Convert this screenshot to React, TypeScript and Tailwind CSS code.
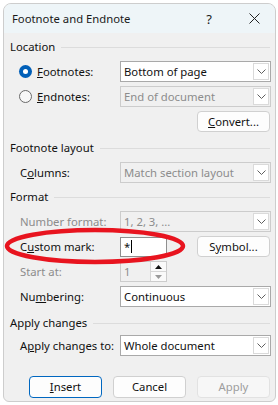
import React from "react";

const FONT = { fontFamily: '"Segoe UI", "Noto Sans", "Open Sans", sans-serif' };

function Chevron({ color = "#5f5f5f" }: { color?: string }) {
  return (
    <svg width="9" height="5" viewBox="0 0 9 5" fill="none" aria-hidden="true">
      <path d="M0.5 0.5 4.5 4.5 8.5 0.5" stroke={color} strokeWidth="1" />
    </svg>
  );
}

function Select({ value, disabled = false }: { value: string; disabled?: boolean }) {
  return (
    <div
      className={
        "flex h-[21px] w-[151px] items-stretch border " +
        (disabled ? "border-[#cccccc] bg-[#f0f0f0]" : "border-[#a9a9a9] bg-white")
      }
    >
      <div
        className={
          "flex flex-1 items-center whitespace-nowrap pl-[3px] " +
          (disabled ? "text-[#8c8c8c]" : "text-[#111111]")
        }
      >
        {value}
      </div>
      <div className="my-[1px] mr-[1px] flex w-[16px] items-center justify-center border border-[#dadada] bg-white">
        <Chevron />
      </div>
    </div>
  );
}

function Section({ title, className = "" }: { title: string; className?: string }) {
  return (
    <div className={"flex h-[16px] items-center whitespace-nowrap pl-[6px] pr-[5px] text-[#111111] " + className}>
      <span>{title}</span>
      <div className="ml-[6px] h-px flex-1 bg-[#dcdcdc]" />
    </div>
  );
}

function Row({ children, className = "" }: { children: React.ReactNode; className?: string }) {
  return <div className={"flex h-[21px] items-center " + className}>{children}</div>;
}

function Label({ children, disabled = false }: { children: React.ReactNode; disabled?: boolean }) {
  return (
    <div
      className={
        "w-[101px] shrink-0 whitespace-nowrap pl-[16px] " + (disabled ? "text-[#8c8c8c]" : "text-[#111111]")
      }
    >
      {children}
    </div>
  );
}

function Button({
  children,
  primary = false,
  disabled = false,
}: {
  children: React.ReactNode;
  primary?: boolean;
  disabled?: boolean;
}) {
  return (
    <div
      className={
        "flex h-[22px] w-[73px] items-center justify-center rounded-[4px] " +
        (primary
          ? "border-[1.5px] border-[#0067c0] bg-[#fdfdfd] text-[#111111]"
          : disabled
          ? "border border-[#e2e2e2] bg-[#f7f7f7] text-[#9d9d9d]"
          : "border border-[#d0d0d0] bg-[#fdfdfd] text-[#111111]")
      }
    >
      {children}
    </div>
  );
}

function Radio({ checked }: { checked: boolean }) {
  return checked ? (
    <div className="flex h-[13px] w-[13px] items-center justify-center rounded-full bg-[#005fb8]">
      <div className="h-[5px] w-[5px] rounded-full bg-white" />
    </div>
  ) : (
    <div className="h-[13px] w-[13px] rounded-full border border-[#6a6a6a] bg-[#f7f7f7]" />
  );
}

export default function App() {
  return (
    <div className="relative h-[405px] w-[278px] bg-white text-[11.3px] leading-[16px]" style={FONT}>
      <div className="ml-[3px] pt-[3px]">
        <div className="h-[399px] w-[273px] overflow-hidden rounded-t-[8px] rounded-b-[6px] border border-[#cdcdcd] bg-[#f0f0f0]">
          {/* title bar */}
          <div className="flex h-[29px] items-center bg-[#eef5f8] pl-[8px] text-[#1a1a1a]">
            <span className="flex-1 whitespace-nowrap">Footnote and Endnote</span>
            <span className="mr-[37px] text-[13px]">?</span>
            <svg width="11" height="11" viewBox="0 0 11 11" className="mr-[15px]" aria-hidden="true">
              <path d="M0.5 0.5 10.5 10.5 M10.5 0.5 0.5 10.5" stroke="#222" strokeWidth="1" />
            </svg>
          </div>

          <div className="pt-[6px]">
            <Section title="Location" />
            <Row className="mt-[6px]">
              <div className="flex w-[116px] shrink-0 items-center whitespace-nowrap pl-[15px] text-[#111111]">
                <Radio checked />
                <span className="ml-[5px]">
                  <u>F</u>ootnotes:
                </span>
              </div>
              <Select value="Bottom of page" />
            </Row>
            <Row className="mt-[4px]">
              <div className="flex w-[116px] shrink-0 items-center whitespace-nowrap pl-[15px] text-[#111111]">
                <Radio checked={false} />
                <span className="ml-[5px]">
                  <u>E</u>ndnotes:
                </span>
              </div>
              <Select value="End of document" disabled />
            </Row>
            <Row className="mt-[4px] justify-end pr-[5px]">
              <div className="flex h-[21px] w-[73px] items-center justify-center rounded-[4px] border border-[#d0d0d0] bg-[#fdfdfd] text-[#111111]">
                <span>
                  <u>C</u>onvert...
                </span>
              </div>
            </Row>

            <Section title="Footnote layout" className="mt-[8px]" />
            <Row className="mt-[6px]">
              <Label>
                C<u>o</u>lumns:
              </Label>
              <div className="ml-[15px]">
                <Select value="Match section layout" disabled />
              </div>
            </Row>

            <Section title="Format" className="mt-[6px]" />
            <Row className="mt-[6px]">
              <Label disabled>Number format:</Label>
              <div className="ml-[15px]">
                <Select value="1, 2, 3, ..." disabled />
              </div>
            </Row>
            <Row className="mt-[4px]">
              <Label>
                C<u>u</u>stom mark:
              </Label>
              <div className="ml-[15px] flex h-[20px] w-[47px] items-center border border-[#8f8f8f] bg-white pl-[3px] text-[#111111]">
                <span>*</span>
                <div className="ml-[1px] h-[13px] w-px bg-black" />
              </div>
              <div className="ml-auto mr-[5px] flex h-[21px] w-[73px] items-center justify-center rounded-[4px] border border-[#d0d0d0] bg-[#fdfdfd] text-[#111111]">
                <span>
                  S<u>y</u>mbol...
                </span>
              </div>
            </Row>
            <Row className="mt-[4px]">
              <Label disabled>Start at:</Label>
              <div className="ml-[15px] flex h-[21px] w-[47px] items-stretch border border-[#cccccc] bg-[#f0f0f0]">
                <div className="flex flex-1 items-center pl-[3px] text-[#8c8c8c]">1</div>
                <div className="flex w-[16px] flex-col border-l border-[#d6d6d6]">
                  <div className="flex flex-1 items-center justify-center border-b border-[#d6d6d6] bg-[#fafafa]">
                    <svg width="7" height="4" viewBox="0 0 7 4" aria-hidden="true">
                      <path d="M0 4 3.5 0 7 4Z" fill="#111" />
                    </svg>
                  </div>
                  <div className="flex flex-1 items-center justify-center bg-[#fafafa]">
                    <svg width="7" height="4" viewBox="0 0 7 4" aria-hidden="true">
                      <path d="M0 0 3.5 4 7 0Z" fill="#9a9a9a" />
                    </svg>
                  </div>
                </div>
              </div>
            </Row>
            <Row className="mt-[4px]">
              <Label>
                Nu<u>m</u>bering:
              </Label>
              <div className="ml-[15px]">
                <Select value="Continuous" />
              </div>
            </Row>

            <Section title="Apply changes" className="mt-[8px]" />
            <Row className="mt-[4px]">
              <Label>
                A<u>p</u>ply changes to:
              </Label>
              <div className="ml-[15px]">
                <Select value="Whole document" />
              </div>
            </Row>

            <div className="mt-[20px] flex justify-end gap-[11px] pr-[5px]">
              <Button primary>
                <u>I</u>nsert
              </Button>
              <Button>Cancel</Button>
              <Button disabled>Apply</Button>
            </div>
          </div>
        </div>
      </div>

      {/* hand-drawn annotation */}
      <svg
        className="pointer-events-none absolute left-0 top-0"
        width="278"
        height="405"
        viewBox="0 0 278 405"
        aria-hidden="true"
      >
        <ellipse cx="95" cy="246" rx="88" ry="16" fill="none" stroke="#e8141f" strokeWidth="4.5" />
      </svg>
    </div>
  );
}
